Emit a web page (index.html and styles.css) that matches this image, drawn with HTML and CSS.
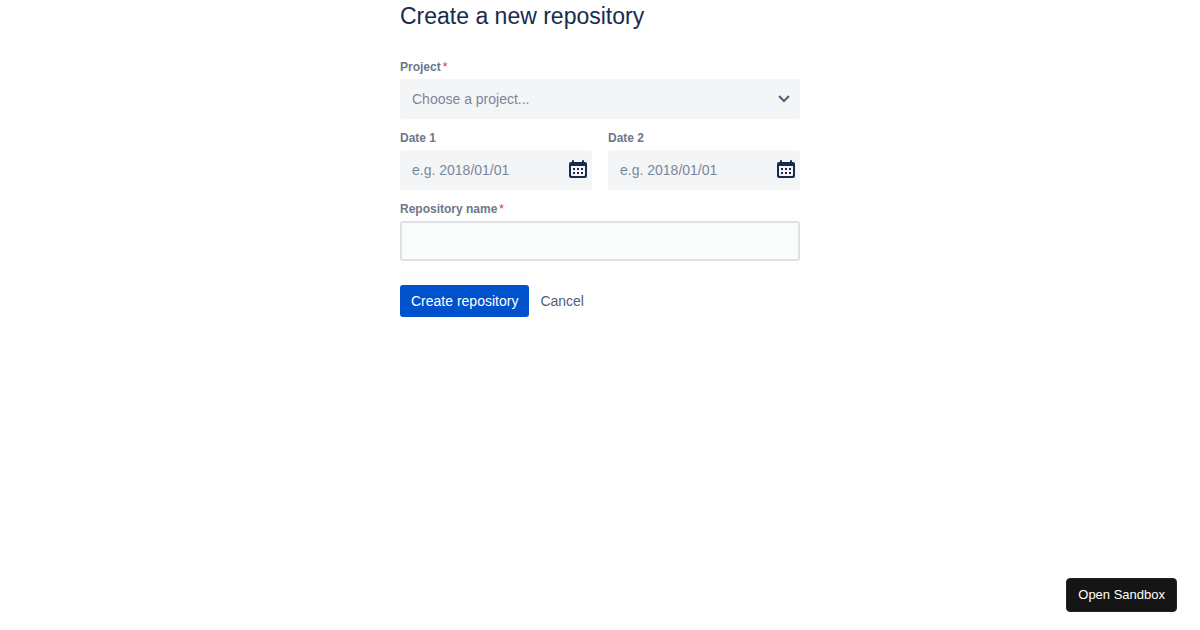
FILE: index.html
```html
<!DOCTYPE html>
<html lang="en">
  <head>
    <meta charset="utf-8" />
    <meta name="viewport" content="width=device-width, initial-scale=1.0" />
    <title>Create a new repository</title>
    <link rel="stylesheet" href="styles.css">
  </head>

  <body>
    <svg class="sprite" aria-hidden="true">
      <symbol id="calendar" viewBox="0 0 18 18">
        <path fill-rule="evenodd" d="M2 2h1V1a1 1 0 0 1 2 0v1h8V1a1 1 0 0 1 2 0v1h1a2 2 0 0 1 2 2v12a2 2 0 0 1-2 2H2a2 2 0 0 1-2-2V4a2 2 0 0 1 2-2zM2 6v9a1 1 0 0 0 1 1h12a1 1 0 0 0 1-1V6z" />
        <path d="M4 8h2v2H4zM8 8h2v2H8zM12 8h2v2h-2zM4 12h2v2H4zM8 12h2v2H8zM12 12h2v2h-2z" />
      </symbol>
    </svg>

    <main class="page">
      <h1 class="title">Create a new repository</h1>

      <form class="form">
        <div class="field">
          <label class="label" for="project">Project<span class="required">*</span></label>
          <div class="control">
            <select class="input select" id="project" required>
              <option value="">Choose a project...</option>
            </select>
            <svg class="icon chevron" width="12" height="8" viewBox="0 0 12 8" aria-hidden="true">
              <path d="M1 1l5 5 5-5" />
            </svg>
          </div>
        </div>

        <div class="row">
          <div class="field">
            <label class="label" for="date1">Date 1</label>
            <div class="control">
              <input class="input" type="text" id="date1" placeholder="e.g. 2018/01/01" />
              <svg class="icon calendar" width="18" height="18" aria-hidden="true"><use href="#calendar" /></svg>
            </div>
          </div>
          <div class="field">
            <label class="label" for="date2">Date 2</label>
            <div class="control">
              <input class="input" type="text" id="date2" placeholder="e.g. 2018/01/01" />
              <svg class="icon calendar" width="18" height="18" aria-hidden="true"><use href="#calendar" /></svg>
            </div>
          </div>
        </div>

        <div class="field">
          <label class="label" for="repo">Repository name<span class="required">*</span></label>
          <input class="input outlined" type="text" id="repo" required />
        </div>

        <div class="actions">
          <button class="button primary" type="submit">Create repository</button>
          <button class="button" type="button">Cancel</button>
        </div>
      </form>
    </main>

    <button class="sandbox" type="button">Open Sandbox</button>
  </body>
</html>
```
FILE: styles.css
```css
* {
  box-sizing: border-box;
}
body {
  margin: 0;
  background: #fff;
  color: #172b4d;
  font-family: "Liberation Sans", Arial, sans-serif;
  font-size: 14px;
}
button,
input,
select {
  font: inherit;
}
.sprite {
  display: none;
}
.page {
  max-width: 400px;
  margin: 0 auto;
  padding-top: 2px;
}
.title {
  margin: 0 0 29px;
  font-size: 23px;
  font-weight: normal;
  line-height: 28px;
}
.form {
  display: flex;
  flex-direction: column;
  gap: 11px;
}
.row {
  display: grid;
  grid-template-columns: 1fr 1fr;
  gap: 16px;
}
.label {
  display: block;
  margin-bottom: 4px;
  color: #6b778c;
  font-size: 12px;
  font-weight: bold;
  line-height: 16px;
}
.required {
  padding-left: 2px;
  color: #de350b;
  font-weight: normal;
}
.control {
  display: grid;
  align-items: center;
}
.control > * {
  grid-area: 1 / 1;
}
.input {
  display: block;
  width: 100%;
  height: 40px;
  padding: 0 12px;
  border: 0;
  border-radius: 3px;
  background: #f4f5f7;
  color: #7a869a;
}
.input::placeholder {
  color: #7a869a;
}
.select {
  appearance: none;
}
.outlined {
  border: 2px solid #dfe1e6;
  background: #fafcfc;
}
.icon {
  justify-self: end;
  pointer-events: none;
}
.chevron {
  margin-right: 10px;
  fill: none;
  stroke: #505f79;
  stroke-width: 2;
}
.calendar {
  margin-right: 5px;
  margin-bottom: 2px;
  fill: #172b4d;
}
.actions {
  display: flex;
  margin-top: 13px;
}
.button {
  height: 32px;
  padding: 0 11px;
  border: 0;
  border-radius: 3px;
  background: none;
  color: #505f79;
}
.primary {
  background: #0052cc;
  color: #fff;
}
.sandbox {
  position: fixed;
  right: 23px;
  bottom: 18px;
  height: 34px;
  padding: 0 11px 2px;
  border: 1px solid #252525;
  border-radius: 4px;
  background: #151515;
  color: #fff;
  font-size: 13px;
}
```
